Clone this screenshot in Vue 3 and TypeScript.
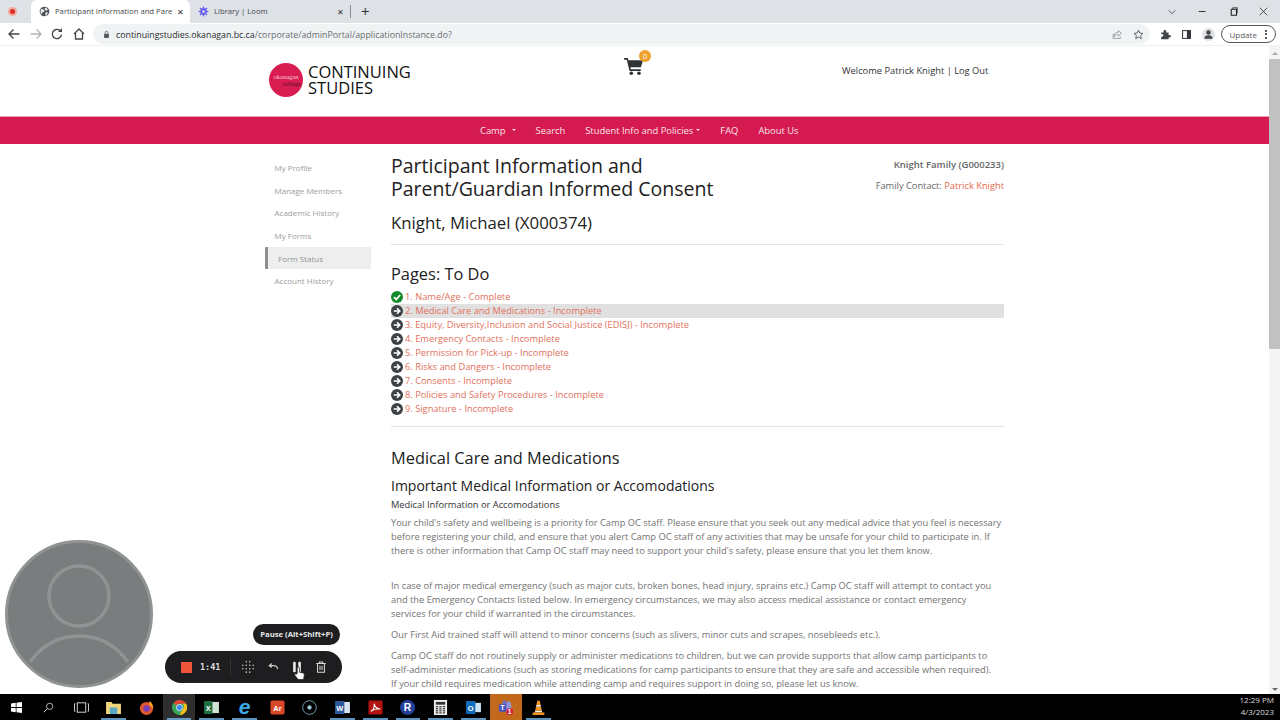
<script setup lang="ts">
const sideItems = ['My Profile', 'Manage Members', 'Academic History', 'My Forms', 'Form Status', 'Account History']

const steps = [
  { label: '1. Name/Age - Complete', done: true },
  { label: '2. Medical Care and Medications - Incomplete', active: true },
  { label: '3. Equity, Diversity,Inclusion and Social Justice (EDISJ) - Incomplete' },
  { label: '4. Emergency Contacts - Incomplete' },
  { label: '5. Permission for Pick-up - Incomplete' },
  { label: '6. Risks and Dangers - Incomplete' },
  { label: '7. Consents - Incomplete' },
  { label: '8. Policies and Safety Procedures - Incomplete' },
  { label: '9. Signature - Incomplete' },
]
</script>

<template>
  <div class="screen">
    <div class="tabstrip">
      <div class="rec-tab"><span class="rec-dot"></span></div>
      <div class="tab tab-active">
        <svg class="favicon" viewBox="0 0 16 16"><circle cx="8" cy="8" r="7" fill="#4d5156" /><path d="M3 4l4 1 1 3-3 1-1 3-2-3zM10 2l3 3-2 2-2-1-1-3zM10 9l3 0-2 5-2-1z" fill="#e8eaed" /></svg>
        <span class="tab-title">Participant Information and Pare</span>
        <span class="tab-x">✕</span>
      </div>
      <div class="tab">
        <svg class="favicon" viewBox="0 0 16 16"><g fill="#625df5"><circle cx="8" cy="8" r="4.6" /><rect x="7" y="1" width="2" height="14" /><rect x="1" y="7" width="14" height="2" /><rect x="7" y="1" width="2" height="14" transform="rotate(45 8 8)" /><rect x="7" y="1" width="2" height="14" transform="rotate(-45 8 8)" /></g><circle cx="8" cy="8" r="2" fill="#dee1e6" /></svg>
        <span class="tab-title">Library | Loom</span>
        <span class="tab-x">✕</span>
      </div>
      <span class="tab-sep"></span>
      <span class="tab-plus">+</span>
      <div class="window-btns">
        <svg viewBox="0 0 12 12" class="win-chev"><path d="M2 4l4 4 4-4" fill="none" stroke="#3c4043" stroke-width="1" /></svg>
        <svg viewBox="0 0 12 12" class="win-btn"><path d="M1 6h9" stroke="#222" stroke-width="1.2" /></svg>
        <svg viewBox="0 0 12 12" class="win-btn"><path d="M3 3h7v8H3z" fill="none" stroke="#222" stroke-width="1.4" /><path d="M5 3V1h6v7h-1" fill="none" stroke="#222" stroke-width="1" /></svg>
        <svg viewBox="0 0 12 12" class="win-btn"><path d="M1 1l10 10M11 1L1 11" stroke="#222" stroke-width="1" /></svg>
      </div>
    </div>

    <div class="toolbar">
      <svg class="tool" viewBox="0 0 14 14"><path d="M12.5 7H2M6.5 2.5L2 7l4.5 4.5" fill="none" stroke="#44474a" stroke-width="1.4" /></svg>
      <svg class="tool" viewBox="0 0 14 14"><path d="M1.5 7H12M7.5 2.5L12 7l-4.5 4.5" fill="none" stroke="#b4b7ba" stroke-width="1.4" /></svg>
      <svg class="tool" viewBox="0 0 14 14"><path d="M11.5 7.5A4.6 4.6 0 1 1 10 3.6" fill="none" stroke="#44474a" stroke-width="1.4" /><path d="M12 1v4H8z" fill="#44474a" /></svg>
      <svg class="tool" viewBox="0 0 14 14"><path d="M2 7l5-5 5 5M3.5 6v6h7V6" fill="none" stroke="#44474a" stroke-width="1.3" /></svg>
      <div class="omnibox">
        <svg class="lock" viewBox="0 0 10 12"><path d="M3 5V3.4a2 2 0 0 1 4 0V5" fill="none" stroke="#55585c" stroke-width="1.1" /><rect x="1.5" y="5" width="7" height="6" rx="1" fill="#55585c" /></svg>
        <span class="url"><span class="url-host">continuingstudies.okanagan.bc.ca</span>/corporate/adminPortal/applicationInstance.do?</span>
        <span class="omni-right">
          <svg class="omni-icon" viewBox="0 0 14 14"><path d="M8 2l4 3.5L8 9V7C5 7 3.5 8 2.5 10 2.5 6.5 4.5 4.3 8 4zM1.5 6v6h9V9.500" fill="none" stroke="#8a8d90" stroke-width="1" /></svg>
          <svg class="omni-icon" viewBox="0 0 14 14"><path d="M7 1.5l1.700 3.600 3.900.5-2.900 2.700.8 3.900L7 10.300l-3.500 1.900.8-3.900-2.900-2.700 3.900-.5z" fill="none" stroke="#4a4d50" stroke-width="1.100" /></svg>
        </span>
      </div>
      <svg class="ext" viewBox="0 0 14 14"><path d="M1.500 4.500h3V3a1.700 1.700 0 0 1 3.400 0v1.500h3v3h1.200a1.700 1.700 0 0 1 0 3.400h-1.200v2h-9.400v-3h1a1.800 1.800 0 0 0 0-3.600h-1z" fill="#44474a" /></svg>
      <svg class="ext" viewBox="0 0 14 14"><rect x="2" y="2" width="10" height="10" fill="none" stroke="#33363a" stroke-width="1.300" /><rect x="7.500" y="2" width="4.500" height="10" fill="#33363a" /></svg>
      <span class="avatar"><svg viewBox="0 0 14 14"><circle cx="7" cy="4.800" r="2.400" fill="#44474a" /><path d="M2.500 11.500c0-2.600 2-3.700 4.500-3.700s4.500 1.100 4.500 3.700z" fill="#44474a" /></svg></span>
      <div class="update"><span>Update</span><span class="kebab"><i></i><i></i><i></i></span></div>
    </div>

    <div class="viewport">
      <div class="page">
        <header class="site-head">
          <div class="head-inner">
            <div class="logo">
              <div class="logo-mark"><span>okanagan</span><span class="logo-college">college</span></div>
              <div class="logo-text">CONTINUING<br>STUDIES</div>
            </div>
            <div class="cart">
              <svg viewBox="0 0 22 20" class="cart-icon"><path d="M0 1h4l.8 2.500H21l-2.300 8H7l.5 2h11v2H6L3 3H0z" fill="#2f3336" /><circle cx="8" cy="18" r="2" fill="#2f3336" /><circle cx="16.500" cy="18" r="2" fill="#2f3336" /></svg>
              <span class="cart-badge">0</span>
            </div>
            <div class="welcome">Welcome Patrick Knight | Log Out</div>
          </div>
        </header>

        <nav class="site-nav">
          <a>Camp<i class="caret caret-wide"></i></a>
          <a>Search</a>
          <a>Student Info and Policies<i class="caret"></i></a>
          <a>FAQ</a>
          <a>About Us</a>
        </nav>

        <div class="body-wrap">
          <aside class="side">
            <a v-for="item in sideItems" :key="item" :class="{ current: item === 'Form Status' }">{{ item }}</a>
          </aside>

          <main class="main">
            <div class="title-row">
              <h1>Participant Information and<br>Parent/Guardian Informed Consent</h1>
              <div class="family">
                <strong>Knight Family (G000233)</strong>
                <span>Family Contact: <a>Patrick Knight</a></span>
              </div>
            </div>
            <h2 class="person">Knight, Michael (X000374)</h2>
            <hr class="rule-one">
            <h2 class="todo">Pages: To Do</h2>
            <ul class="steps">
              <li v-for="step in steps" :key="step.label" :class="{ active: step.active }">
                <svg v-if="step.done" viewBox="0 0 12 12" class="step-icon"><circle cx="6" cy="6" r="6" fill="#138a2c" /><path d="M3 6.200l2.200 2.200L9.200 4" fill="none" stroke="#fff" stroke-width="1.700" /></svg>
                <svg v-else viewBox="0 0 12 12" class="step-icon"><circle cx="6" cy="6" r="6" fill="#3d4144" /><path d="M2.700 6h6M6 3.200L8.800 6 6 8.800" fill="none" stroke="#fff" stroke-width="1.600" /></svg>
                <a>{{ step.label }}</a>
              </li>
            </ul>
            <hr class="rule-two">
            <h2 class="section">Medical Care and Medications</h2>
            <h3>Important Medical Information or Accomodations</h3>
            <h4>Medical Information or Accomodations</h4>
            <p class="first">Your child's safety and wellbeing is a priority for Camp OC staff. Please ensure that you seek out any medical advice that you feel is necessary<br>before registering your child, and ensure that you alert Camp OC staff of any activities that may be unsafe for your child to participate in. If<br>there is other information that Camp OC staff may need to support your child's safety, please ensure that you let them know.</p>
            <p class="second">In case of major medical emergency (such as major cuts, broken bones, head injury, sprains etc.) Camp OC staff will attempt to contact you<br>and the Emergency Contacts listed below. In emergency circumstances, we may also access medical assistance or contact emergency<br>services for your child if warranted in the circumstances.</p>
            <p class="third">Our First Aid trained staff will attend to minor concerns (such as slivers, minor cuts and scrapes, nosebleeds etc.).</p>
            <p class="third">Camp OC staff do not routinely supply or administer medications to children, but we can provide supports that allow camp participants to<br>self-administer medications (such as storing medications for camp participants to ensure that they are safe and accessible when required).<br>If your child requires medication while attending camp and requires support in doing so, please let us know.</p>
          </main>
        </div>
      </div>

      <div class="scrollbar">
        <span class="arrow-up"></span>
        <span class="thumb"></span>
        <span class="arrow-down"></span>
      </div>

      <div class="cam">
        <svg viewBox="0 0 148 148">
          <circle cx="74" cy="74" r="72.500" fill="#7a7d7d" stroke="#909393" stroke-width="3" />
          <circle cx="74" cy="56" r="30" fill="none" stroke="#909393" stroke-width="3.500" />
          <path d="M25 122C38 104 55 96 74 96s36 8 49 26" fill="none" stroke="#909393" stroke-width="3.500" />
        </svg>
      </div>

      <div class="loom-tip">Pause (Alt+Shift+P)</div>
      <div class="loom-bar">
        <span class="loom-stop"></span>
        <span class="loom-time">1:41</span>
        <span class="loom-div"></span>
        <svg class="loom-icon" viewBox="0 0 14 14"><g fill="#c9caca"><circle v-for="p in [[5,1],[9,1],[1,5],[5,5],[9,5],[13,5],[1,9],[5,9],[9,9],[13,9],[5,13],[9,13]]" :key="p.join()" :cx="p[0]" :cy="p[1]" r="0.900" /></g></svg>
        <svg class="loom-icon" viewBox="0 0 14 14"><path d="M3 5.500h5c2.500 0 4 1.500 4.500 4" fill="none" stroke="#c9caca" stroke-width="1.400" /><path d="M5.500 2L1.500 5.500 5.500 8.500z" fill="#c9caca" /></svg>
        <svg class="loom-icon" viewBox="0 0 14 14"><rect x="2.500" y="1" width="3" height="12" rx="1" fill="#eee" /><rect x="8.500" y="1" width="3" height="12" rx="1" fill="#eee" /></svg>
        <svg class="loom-icon" viewBox="0 0 14 14"><path d="M1.500 3h11M5 3V1.200h4V3M3 3v10h8V3M5.800 5.500v5M8.200 5.500v5" fill="none" stroke="#d8d8d8" stroke-width="1.200" /></svg>
      </div>
      <svg class="hand" viewBox="0 0 12 16"><path d="M3.500 8V2a1.200 1.200 0 0 1 2.400 0v4.500l4 1c1 .3 1.500 1 1.300 2l-.8 5H4.500L1 10c-.7-1 .6-2.300 1.600-1.300z" fill="#fff" stroke="#222" stroke-width="0.800" /></svg>
    </div>

    <footer class="taskbar">
      <div class="start"><svg viewBox="0 0 14 14" class="tb-svg"><path d="M0 2l6-.9V6.500H0zM7 1l7-1v6.500H7zM0 7.500h6v5.400l-6-.9zM7 7.500h7V14l-7-1z" fill="#fff" /></svg></div>
      <div class="tb"><svg viewBox="0 0 14 14" class="tb-svg"><circle cx="8.500" cy="5.500" r="4" fill="none" stroke="#ddd" stroke-width="1" /><path d="M5.500 8.500L1 13" stroke="#ddd" stroke-width="1.200" /></svg></div>
      <div class="tb"><svg viewBox="0 0 16 12" class="tb-svg wide"><rect x="3.500" y="1" width="9" height="10" fill="none" stroke="#ddd" stroke-width="1" /><path d="M1.500 2H.5v8h1M14.500 2h1v8h-1" fill="none" stroke="#ddd" /></svg></div>
      <div class="tb run"><svg viewBox="0 0 16 14" class="tb-svg wide"><path d="M0 1h6l1 2h9v11H0z" fill="#f0d77c" /><rect x="4" y="7" width="8" height="7" fill="#5aa9c9" /></svg></div>
      <div class="tb"><svg viewBox="0 0 16 16" class="tb-svg big"><circle cx="8" cy="9" r="7" fill="#e4572e" /><circle cx="8" cy="9" r="3.500" fill="#7b3fb5" /><path d="M11 1c3 2 4.500 5 4 8l-4-4z" fill="#f9a825" /></svg></div>
      <div class="tb run active"><svg viewBox="0 0 16 16" class="tb-svg big"><circle cx="8" cy="8" r="8" fill="#3aa757" /><path d="M8 0a8 8 0 0 1 7 4H8a4 4 0 0 0-3.500 2L1.800 2.800A8 8 0 0 1 8 0z" fill="#e34133" /><path d="M15 4a8 8 0 0 1-7 12l3.500-6a4 4 0 0 0 0-6z" fill="#fbc116" /><circle cx="8" cy="8" r="3.300" fill="#4285f4" stroke="#fff" stroke-width="0.800" /></svg></div>
      <div class="tb run"><svg viewBox="0 0 16 14" class="tb-svg wide"><rect x="7" y="1" width="9" height="12" fill="#cfe3d6" /><rect x="0" y="0" width="9" height="14" fill="#1d6f42" /><text x="4.500" y="10.500" class="tb-letter">X</text></svg></div>
      <div class="tb run"><span class="ie">e</span></div>
      <div class="tb"><svg viewBox="0 0 16 16" class="tb-svg big"><rect x="0.500" y="0.500" width="15" height="15" rx="2" fill="#d9472b" /><text x="8" y="11.500" class="tb-letter">Ar</text></svg></div>
      <div class="tb"><svg viewBox="0 0 16 16" class="tb-svg big"><circle cx="8" cy="8" r="7.300" fill="none" stroke="#7fb4cc" stroke-width="0.900" /><circle cx="8" cy="8" r="2.300" fill="#9cc7dc" /></svg></div>
      <div class="tb run"><svg viewBox="0 0 16 14" class="tb-svg wide"><rect x="7" y="1" width="9" height="12" fill="#d8e2f2" /><rect x="0" y="0" width="10" height="14" fill="#2b579a" /><text x="5" y="10.500" class="tb-letter">W</text></svg></div>
      <div class="tb run"><svg viewBox="0 0 16 16" class="tb-svg big"><rect x="0.500" y="0.500" width="15" height="15" rx="1.500" fill="#b3140f" /><path d="M3 12c3-1 4-5 3.500-8 1 4 3 5.500 6.500 5.500-4-.5-7 .5-10 2.500z" fill="none" stroke="#fff" stroke-width="1.100" /></svg></div>
      <div class="tb run"><svg viewBox="0 0 16 16" class="tb-svg big"><circle cx="8" cy="8" r="8" fill="#23409a" /><text x="8" y="11.800" class="tb-letter large">R</text></svg></div>
      <div class="tb run"><svg viewBox="0 0 14 16" class="tb-svg big"><rect width="14" height="16" fill="#f0f0f0" /><rect x="2" y="2" width="10" height="3" fill="#333" /><g fill="#333"><rect v-for="c in 12" :key="c" :x="2 + ((c - 1) % 3) * 3.700" :y="6.500 + Math.floor((c - 1) / 3) * 2.200" width="2.500" height="1.300" /></g></svg></div>
      <div class="tb run"><svg viewBox="0 0 16 14" class="tb-svg wide"><rect x="7" y="2" width="9" height="10" fill="#cfe3f5" /><rect x="0" y="0" width="10" height="14" fill="#0f6cbd" /><text x="5" y="10.500" class="tb-letter">O</text></svg></div>
      <div class="tb teams">
        <svg viewBox="0 0 18 18" class="tb-svg big"><circle cx="13" cy="4" r="2.500" fill="#8f96d8" /><rect x="8" y="5" width="8" height="8" rx="2" fill="#8f96d8" /><circle cx="8" cy="3.500" r="2.800" fill="#6a6fc4" /><rect x="1" y="5" width="9" height="9" rx="1" fill="#4b53bc" /><text x="5.500" y="12" class="tb-letter">T</text><circle cx="14" cy="14" r="4" fill="#d1203a" /><text x="14" y="16.500" class="tb-letter">1</text></svg>
      </div>
      <div class="tb run"><svg viewBox="0 0 16 18" class="tb-svg big"><path d="M6.500 1h3l1 5h-5zM5 8h6l1 5H4z" fill="#f7931e" /><path d="M5.500 6h5l.5 2H5zM4 13h8l.5 2h-9z" fill="#f5f0e6" /><rect x="1" y="15" width="14" height="3" fill="#f7931e" /></svg></div>
      <div class="clock">12:29 PM<br>4/3/2023</div>
    </footer>
  </div>
</template>

<style>
html, body { margin: 0; background: #000; overflow: hidden; }
</style>

<style scoped>
.screen {
  width: 1280px;
  height: 720px;
  display: flex;
  flex-direction: column;
  overflow: hidden;
  font-family: "Open Sans", "Noto Sans", sans-serif;
  background: #fff;
}

/* browser chrome */
.tabstrip {
  height: 23px;
  flex: none;
  display: flex;
  align-items: stretch;
  background: #dee1e6;
  font-size: 7.700px;
  color: #45494d;
}
.rec-tab { width: 31px; display: flex; align-items: center; justify-content: center; padding-right: 6px; box-sizing: border-box; }
.rec-dot {
  width: 5px; height: 5px; border-radius: 50%;
  background: #d93025;
  box-shadow: 0 0 0 2px #f0a8a0;
}
.tab { width: 160px; display: flex; align-items: center; padding: 0 6px 1px 8px; box-sizing: border-box; }
.tab-active { width: 159px; background: #fff; border-radius: 6px 6px 0 0; }
.favicon { width: 11px; height: 11px; flex: none; margin-right: 5px; }
.tab-title { flex: 1; min-width: 0; white-space: nowrap; }
.tab-x { font-size: 8px; color: #333; margin-left: 4px; }
.tab-sep { width: 1px; height: 13px; background: #8b8e92; align-self: center; }
.tab-plus { font-size: 15px; line-height: 22px; margin-left: 10px; color: #333; }
.window-btns { margin-left: auto; display: flex; align-items: center; padding-right: 12px; gap: 21.500px; }
.win-chev { width: 10px; height: 10px; }
.win-btn { width: 9px; height: 9px; margin-bottom: 1px; }

.toolbar {
  height: 23px;
  flex: none;
  display: flex;
  align-items: center;
  background: #fff;
  padding-left: 7px;
  border-bottom: 1px solid #eef0f1;
  box-sizing: border-box;
}
.tool { width: 14px; height: 14px; flex: none; margin-right: 7.500px; }
.omnibox {
  width: 1057px;
  flex: none;
  height: 20px;
  border-radius: 10px;
  background: #f0f3f4;
  display: flex;
  align-items: center;
  padding: 1px 6px 0 9px;
  box-sizing: border-box;
}
.lock { width: 7px; height: 9px; margin: 0 6px 0 1px; flex: none; }
.url { font-size: 8.800px; color: #6a6e72; white-space: nowrap; }
.url-host { color: #2a2d30; }
.omni-right { margin-left: auto; display: flex; gap: 10px; align-items: center; }
.omni-icon { width: 11px; height: 11px; }
.ext { width: 11px; height: 11px; flex: none; margin-left: 10px; }
.avatar {
  width: 13px; height: 13px; border-radius: 50%;
  background: #dfe1e5;
  margin-left: 10px;
  flex: none;
  display: flex;
}
.update {
  margin-left: 5.500px;
  width: 55px;
  flex: none;
  height: 18px;
  border: 1px solid #55585b;
  border-radius: 9px;
  box-sizing: border-box;
  display: flex;
  align-items: center;
  padding: 0 8px 0 8px;
  font-size: 8px;
  color: #55595c;
  justify-content: space-between;
}
.kebab { display: flex; flex-direction: column; gap: 1.500px; }
.kebab i { width: 2px; height: 2px; border-radius: 50%; background: #222; }

/* page */
.viewport {
  flex: 1;
  min-height: 0;
  display: flex;
  position: relative;
  background: #fff;
}
.page { flex: 1; min-width: 0; overflow: hidden; }

.site-head { height: 70px; }
.head-inner { width: 740px; margin-left: 269px; display: flex; position: relative; }
.logo { display: flex; align-items: center; gap: 5px; margin-top: 16px; height: 36px; }
.logo-mark {
  width: 34px; height: 34px; border-radius: 50%;
  background: #d91c52;
  color: #f7c6d4;
  font-family: "Liberation Serif", serif;
  font-size: 6.500px;
  line-height: 7px;
  display: flex;
  flex-direction: column;
  align-items: center;
  justify-content: center;
  overflow: hidden;
}
.logo-college { color: #4d1428; align-self: flex-end; padding-right: 2px; }
.logo-text { font-size: 16.500px; line-height: 16px; color: #111; }
.cart { position: absolute; left: 355px; top: 4px; width: 30px; height: 28px; }
.cart-icon { position: absolute; left: 0; top: 7px; width: 20px; height: 18px; }
.cart-badge {
  position: absolute; left: 15px; top: 0;
  width: 12px; height: 12px; border-radius: 50%;
  background: #f0a02a; color: #fff;
  font-size: 8px; line-height: 12px; text-align: center;
}
.welcome { position: absolute; left: 573px; top: 17.500px; font-size: 9.300px; line-height: 14px; color: #333; white-space: nowrap; }

.site-nav {
  height: 28px;
  background: #d41a50;
  display: flex;
  align-items: center;
  padding: 0 0 1px 480px;
  gap: 20px;
  font-size: 9.400px;
  color: #fbe4ea;
  border-top: 1px solid #ee9db3;
  box-sizing: border-box;
}
.site-nav a { display: flex; align-items: center; white-space: nowrap; }
.caret {
  width: 0; height: 0;
  border: 2.500px solid transparent;
  border-top-color: #fbe4ea;
  border-bottom: 0;
  margin-left: 3px;
}
.caret-wide { margin-left: 6px; }

.body-wrap { display: flex; padding-left: 265px; }
.side { width: 106px; flex: none; padding-top: 12.500px; display: flex; flex-direction: column; }
.side a {
  height: 22.600px;
  display: flex;
  align-items: center;
  padding-left: 9.500px;
  font-size: 8px;
  color: #9a9c9e;
  white-space: nowrap;
}
.side a.current {
  background: #eeeeee;
  color: #939597;
  border-left: 3px solid #8c8e90;
  padding-left: 10px;
  border-radius: 1px;
}

.main { width: 613px; margin-left: 20px; flex: none; color: #222; }
.title-row { display: flex; justify-content: space-between; padding-top: 10px; }
h1 { margin: 0; font-size: 19.550px; line-height: 23px; font-weight: 400; color: #222; white-space: nowrap; }
.family { display: flex; flex-direction: column; align-items: flex-end; font-size: 9.300px; line-height: 14px; color: #666; padding-top: 4px; gap: 7px; white-space: nowrap; }
.family strong { font-weight: 600; color: #666; font-size: 9.500px; }
.family a { color: #e2684a; }
h2 { margin: 0; font-weight: 400; color: #222; }
.person { font-size: 16.800px; line-height: 22px; margin-top: 12px; }
hr { border: 0; border-top: 1px solid #e2e2e2; margin: 0; }
.rule-one { margin-top: 10px; }
.todo { font-size: 16.400px; line-height: 20px; margin-top: 19px; }
.steps { list-style: none; padding: 0; margin: 6px 0 0; }
.steps li { height: 14px; display: flex; align-items: center; font-size: 9.300px; white-space: nowrap; }
.steps li.active { background: #e0e0e0; }
.steps a { color: #e2705c; margin-top: -2px; }
.step-icon { width: 12px; height: 12px; flex: none; margin: -1px 2px 0 0; }
.rule-two { margin-top: 10px; }
.section { font-size: 16.350px; line-height: 20px; margin-top: 21px; }
h3 { margin: 8px 0 0; font-size: 14px; line-height: 20px; font-weight: 400; color: #222; }
h4 { margin: 2px 0 0; font-size: 9.300px; line-height: 14px; font-weight: 400; color: #333; }
p { margin: 0; font-size: 9.320px; line-height: 14px; color: #727272; white-space: nowrap; }
.first { margin-top: 4px; }
.second { margin-top: 21px; }
.third { margin-top: 7px; }

.scrollbar {
  width: 11px;
  flex: none;
  background: #f4f4f4;
  display: flex;
  flex-direction: column;
  align-items: center;
}
.arrow-up, .arrow-down { width: 0; height: 0; border: 3px solid transparent; }
.arrow-up { border-bottom-color: #a8a8a8; margin-top: 3px; }
.arrow-down { border-top-color: #6a6a6a; margin-top: auto; margin-bottom: 0; }
.thumb { width: 100%; height: 290px; background: #c1c1c1; margin-top: 4px; }

.cam { position: absolute; left: 5px; top: 494px; width: 148px; height: 148px; }
.cam svg { display: block; width: 100%; height: 100%; }
.loom-tip {
  position: absolute; left: 253px; top: 578px;
  width: 87px; height: 21px;
  border-radius: 11px;
  background: #1e1e20;
  color: #e8e8e8;
  font-size: 7.700px;
  font-weight: 700;
  line-height: 21px;
  text-align: center;
  white-space: nowrap;
}
.loom-bar {
  position: absolute; left: 165px; top: 605px;
  width: 177px; height: 32px;
  border-radius: 16px;
  background: #1e1e20;
  display: flex;
  align-items: center;
  padding-left: 16px;
  box-sizing: border-box;
}
.loom-stop { width: 11px; height: 11px; background: #f0553a; }
.loom-time { margin-left: 8px; font-family: "DejaVu Sans Mono", monospace; font-weight: 700; font-size: 8.500px; color: #ddd; }
.loom-div { width: 1px; height: 18px; background: #333; margin-left: 10px; }
.loom-icon { width: 12px; height: 12px; margin-left: 12.300px; }
.loom-icon:first-of-type { margin-left: 11px; }
.hand { position: absolute; left: 294px; top: 620px; width: 11px; height: 15px; }

/* taskbar */
.taskbar {
  height: 26px;
  flex: none;
  background: #000;
  display: flex;
  align-items: stretch;
  position: relative;
}
.start, .tb {
  width: 32.700px;
  flex: none;
  display: flex;
  align-items: center;
  justify-content: center;
  box-sizing: border-box;
  position: relative;
}
.start { width: 32px; }
.tb-svg { width: 11px; height: 11px; }
.tb-svg.wide { width: 15px; height: 13px; }
.tb-svg.big { width: 15px; height: 15px; }
.tb.run::after {
  content: "";
  position: absolute;
  left: 4px; right: 4px; bottom: 0;
  height: 2px;
  background: #76b9ed;
  opacity: 0.800;
}
.tb.active { background: #2e2e2e; }
.tb.teams { background: #c2691b; }
.tb-letter {
  font-family: "Liberation Sans", sans-serif;
  font-size: 8px;
  font-weight: 700;
  fill: #fff;
  text-anchor: middle;
}
.tb-letter.large { font-size: 11px; }
.ie { font-family: "Liberation Sans", sans-serif; font-size: 21px; line-height: 20px; color: #3fa9e6; font-style: italic; font-weight: 700; }
.clock {
  position: absolute; right: 6px; top: 0;
  text-align: right;
  font-size: 8px;
  line-height: 12px;
  color: #ddd;
}
</style>
